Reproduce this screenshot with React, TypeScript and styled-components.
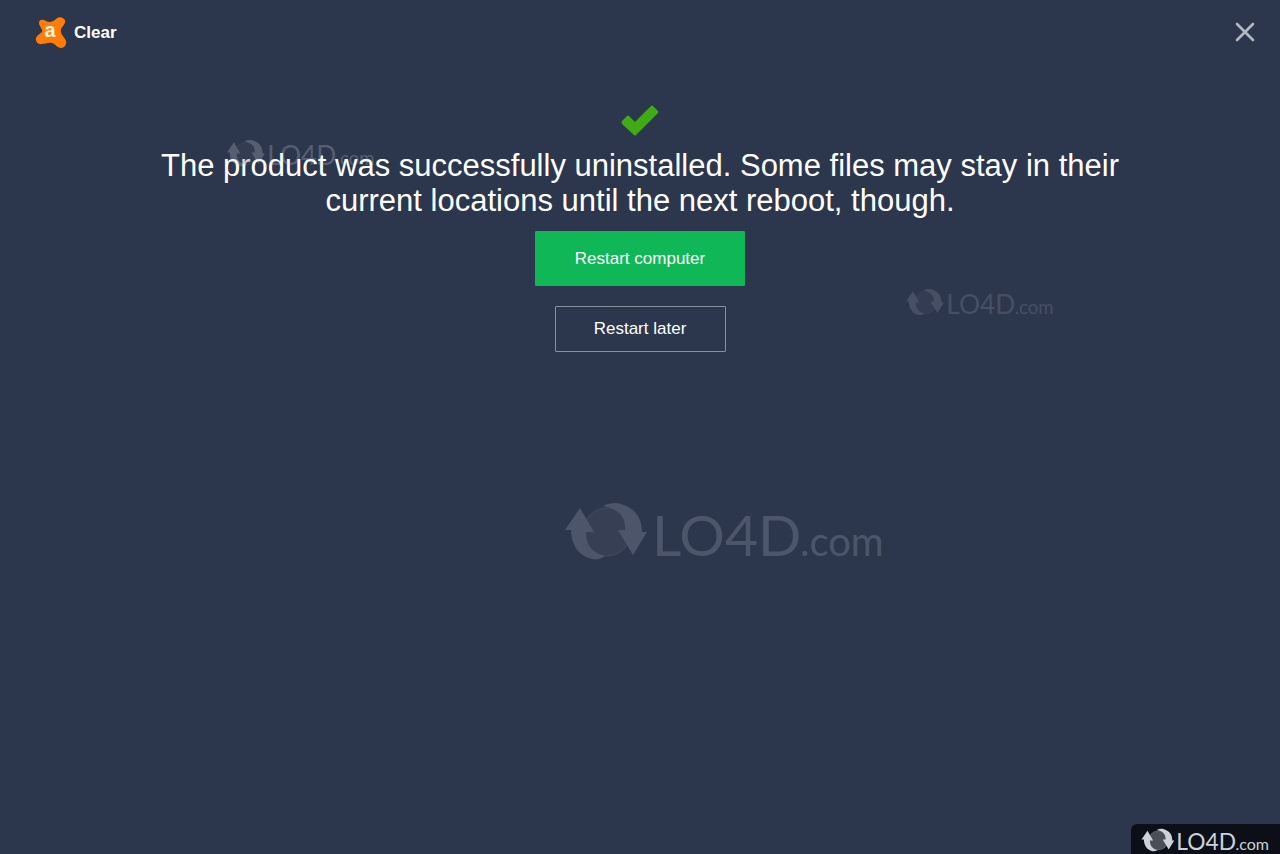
import React from "react";
import styled, { createGlobalStyle } from "styled-components";

const GlobalStyle = createGlobalStyle`
  *, *::before, *::after { box-sizing: border-box; }
  body {
    margin: 0;
    background: #2c364d;
    font-family: "Liberation Sans", Arial, sans-serif;
  }
`;

const Window = styled.div`
  position: relative;
  display: flex;
  flex-direction: column;
  min-height: 100vh;
  overflow: hidden;
  background: #2c364d;
  color: #fff;
`;

const Header = styled.header`
  display: flex;
  align-items: center;
  justify-content: space-between;
  padding: 16px 24px 16px 34px;
`;

const Brand = styled.div`
  display: flex;
  align-items: center;
  gap: 6px;
`;

const BrandName = styled.span`
  font-size: 17px;
  font-weight: 700;
  line-height: 20px;
`;

const CloseButton = styled.button`
  display: flex;
  padding: 0;
  border: 0;
  background: transparent;
  color: #b4b8c2;
  cursor: pointer;
`;

const Content = styled.main`
  display: flex;
  flex-direction: column;
  align-items: center;
  padding: 38px 120px;
`;

const Message = styled.h1`
  max-width: 1000px;
  margin: 10px 0 13px;
  font-size: 31px;
  font-weight: 400;
  line-height: 35px;
  text-align: center;
`;

const Actions = styled.div`
  display: flex;
  flex-direction: column;
  align-items: center;
  gap: 20px;
`;

const ActionButton = styled.button<{ $primary?: boolean }>`
  min-width: ${(p) => (p.$primary ? "210px" : "171px")};
  height: ${(p) => (p.$primary ? "55px" : "46px")};
  padding: 0 36px;
  border: ${(p) => (p.$primary ? "0" : "1px solid #8a909d")};
  border-radius: 1px;
  background: ${(p) => (p.$primary ? "#10b757" : "transparent")};
  color: #fff;
  font-family: inherit;
  font-size: 17px;
  line-height: 20px;
  cursor: pointer;
`;

const Watermark = styled.div<{ $left: number; $top: number; $opacity: number }>`
  position: absolute;
  left: ${(p) => p.$left}px;
  top: ${(p) => p.$top}px;
  display: flex;
  opacity: ${(p) => p.$opacity};
  pointer-events: none;
`;

const SiteBadge = styled.div`
  position: absolute;
  right: 0;
  bottom: 0;
  display: flex;
  padding: 4px 10px 2px;
  border-radius: 6px 0 0 0;
  background: #0c0f17;
`;

const LogoSvg = styled.svg`
  display: block;
  overflow: visible;
  font-family: Lato, "Liberation Sans", sans-serif;
  font-weight: 400;
`;

function Lo4dLogo({ width, ball }: { width: number; ball: string }) {
  return (
    <LogoSvg width={width} height={Math.round((width * 60) / 320)} viewBox="0 0 320 60" role="img" aria-label="LO4D.com">
      <circle cx="42" cy="31" r="24" fill={ball} stroke="#cdd1d8" strokeOpacity="0.6" />
      <path
        d="M15 7 L29 31 L21 31 C21 43 26 52 40 55 C36 58 32 59 27 58 C13 55 6 43 6 29 L0 29 Z"
        fill="#cdd1d8"
      />
      <path
        d="M68 54 L53 29 L60 29 C61 17 55 8 38 5 C44 2 51 1 56 3 C70 7 77 17 77 31 L82 31 Z"
        fill="#cdd1d8"
      />
      <text x="87" y="55" fontSize="57" fill="#cdd1d8">LO4D</text>
      <text x="235" y="55" fontSize="40" fill="#cdd1d8">.com</text>
    </LogoSvg>
  );
}

function AvastMark() {
  return (
    <svg width="34" height="34" viewBox="0 0 34 34" aria-hidden="true">
      <path
        d="M5 7 C5 3 9 3 12 5 C15 7 19 6 22 3 C25 0 29 1 31 4 C32 8 28 10 27 13 C26 17 29 20 31 23 C34 27 31 32 27 32 C23 32 22 28 18 27 C14 26 11 28 8 28 C4 29 1 25 2 22 C3 19 6 18 8 16 C9 13 5 10 5 7 Z"
        fill="#ff7d06"
      />
      <text x="16" y="21" textAnchor="middle" fontFamily="Liberation Sans, sans-serif" fontWeight="700" fontSize="20" fill="#fff3e2">a</text>
    </svg>
  );
}

function CheckMark() {
  return (
    <svg width="40" height="34" viewBox="0 0 40 34" aria-hidden="true">
      <path
        d="M2 17 L7 12 Q8 11 9 12 L15 18 L31 2 Q32 1 33 2 L38 7 Q39 8 38 9 L16 31 Q15 32 14 31 L2 20 Q1 18 2 17 Z"
        fill="#3fac13"
      />
    </svg>
  );
}

export default function App() {
  return (
    <>
      <GlobalStyle />
      <Window>
        <Header>
          <Brand>
            <AvastMark />
            <BrandName>Clear</BrandName>
          </Brand>
          <CloseButton type="button" aria-label="Close">
            <svg width="22" height="22" viewBox="0 0 22 22" fill="none" stroke="currentColor" strokeWidth="2.6" strokeLinecap="round" aria-hidden="true">
              <path d="M3 2 L19 18 M19 2 L3 18" />
            </svg>
          </CloseButton>
        </Header>

        <Content>
          <CheckMark />
          <Message>
            The product was successfully uninstalled. Some files may stay in their current locations until the next
            reboot, though.
          </Message>
          <Actions>
            <ActionButton type="button" $primary>
              Restart computer
            </ActionButton>
            <ActionButton type="button">Restart later</ActionButton>
          </Actions>
        </Content>

        <Watermark $left={227} $top={139} $opacity={0.26}>
          <Lo4dLogo width={148} ball="#4a505e" />
        </Watermark>
        <Watermark $left={906} $top={288} $opacity={0.16}>
          <Lo4dLogo width={148} ball="#5a6070" />
        </Watermark>
        <Watermark $left={565} $top={501} $opacity={0.2}>
          <Lo4dLogo width={320} ball="#626774" />
        </Watermark>

        <SiteBadge>
          <Lo4dLogo width={129} ball="#4a4e58" />
        </SiteBadge>
      </Window>
    </>
  );
}
